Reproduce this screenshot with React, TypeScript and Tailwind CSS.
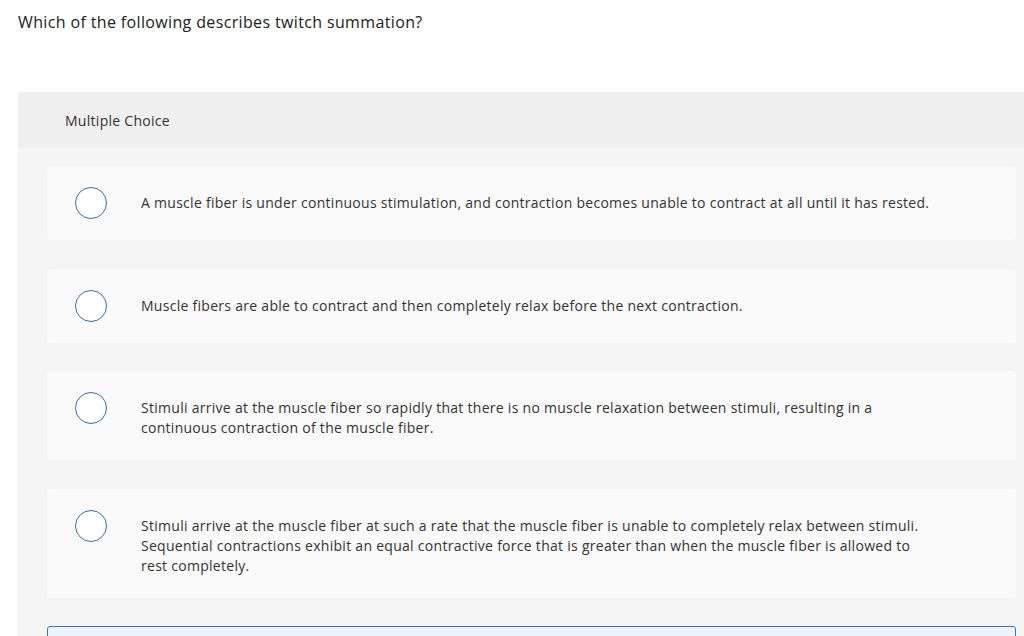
const options = [
  'A muscle fiber is under continuous stimulation, and contraction becomes unable to contract at all until it has rested.',
  'Muscle fibers are able to contract and then completely relax before the next contraction.',
  'Stimuli arrive at the muscle fiber so rapidly that there is no muscle relaxation between stimuli, resulting in a continuous contraction of the muscle fiber.',
  'Stimuli arrive at the muscle fiber at such a rate that the muscle fiber is unable to completely relax between stimuli. Sequential contractions exhibit an equal contractive force that is greater than when the muscle fiber is allowed to rest completely.',
];

function Option({ text }: { text: string }) {
  return (
    <div className="flex items-start rounded-[4px] bg-[#fafafa] pt-[21px] pb-[21px] pl-[28px]">
      <div className="h-[32px] w-[32px] shrink-0 rounded-full border-[1.5px] border-[#3c6ea6] bg-white" />
      <p className="ml-[34px] max-w-[795px] pt-[6px] pb-[1px] text-[14px] leading-[20px] tracking-[0.28px] text-[#333]">
        {text}
      </p>
    </div>
  );
}

export default function App() {
  return (
    <div className="h-[636px] overflow-hidden bg-white font-['Open_Sans',Arial,sans-serif]">
      <h1 className="pl-[18px] pt-[11px] text-[16px] leading-[22px] tracking-[0.36px] text-[#222]">
        Which of the following describes twitch summation?
      </h1>

      <div className="ml-[18px] mt-[59px] bg-[#f5f5f5]">
        <div className="flex h-[56px] items-center bg-[#f0f0f0] pl-[47px] text-[14px] tracking-[0.28px] text-[#333]">
          Multiple Choice
        </div>
        <div className="flex flex-col gap-[28.5px] pl-[29px] pr-[8px] pt-[18px]">
          {options.map((o, i) => (
            <Option key={i} text={o} />
          ))}
          <div className="h-[40px] rounded-t-[3px] border-[1.5px] border-[#3b74b8] bg-[#ebf3fd]" />
        </div>
      </div>
    </div>
  );
}
